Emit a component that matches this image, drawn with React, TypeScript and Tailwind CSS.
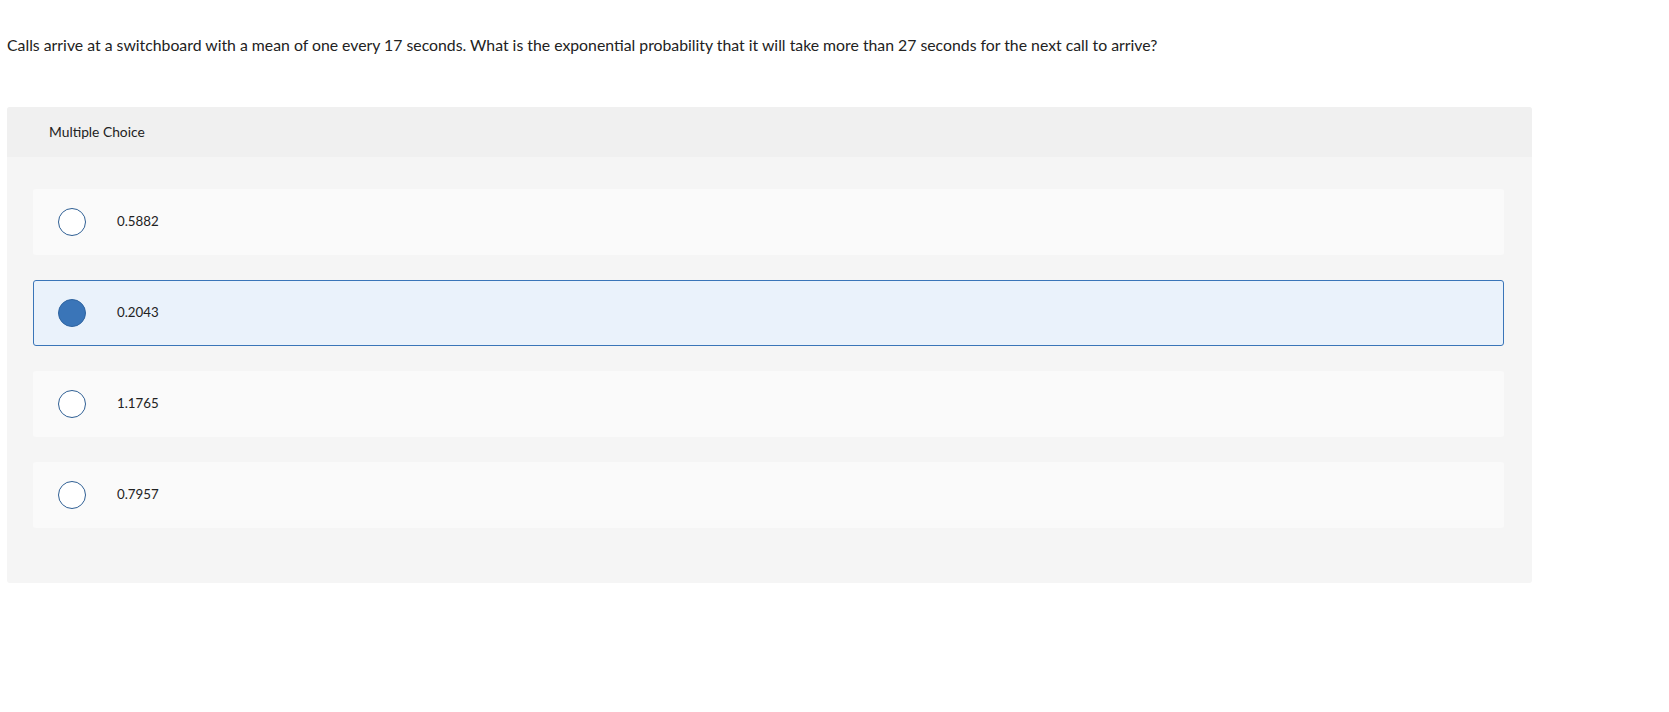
const options = [
  { label: "0.5882", selected: false },
  { label: "0.2043", selected: true },
  { label: "1.1765", selected: false },
  { label: "0.7957", selected: false },
];

export default function App() {
  return (
    <div className="min-h-screen bg-white text-[#222] font-['Lato','Open_Sans',sans-serif]">
      <p className="pl-[7px] pt-[35px] text-[15.8px] leading-[19px]">
        Calls arrive at a switchboard with a mean of one every 17 seconds. What is the exponential
        probability that it will take more than 27 seconds for the next call to arrive?
      </p>

      <div className="ml-[7px] mt-[53px] w-[1525px] rounded-[3px] bg-[#f5f5f5] pb-[55px]">
        <div className="flex h-[50px] items-center rounded-t-[3px] bg-[#f0f0f0] pl-[42px] text-[13.8px]">
          Multiple Choice
        </div>

        <div className="flex flex-col gap-[25px] pl-[26px] pr-[28px] pt-[32px]">
          {options.map((opt) => (
            <div
              key={opt.label}
              className={
                opt.selected
                  ? "flex h-[66px] items-center rounded-[3px] border border-[#3a75b8] bg-[#eaf2fb] pl-[24px]"
                  : "flex h-[66px] items-center rounded-[3px] border border-transparent bg-[#fafafa] pl-[24px]"
              }
            >
              <span
                className={
                  opt.selected
                    ? "h-[28px] w-[28px] rounded-full border border-[#2f64a0] bg-[#3a75b8]"
                    : "h-[28px] w-[28px] rounded-full border-[1.5px] border-[#2f5f94] bg-white"
                }
              />
              <span className="ml-[31px] text-[13.3px]">{opt.label}</span>
            </div>
          ))}
        </div>
      </div>
    </div>
  );
}
